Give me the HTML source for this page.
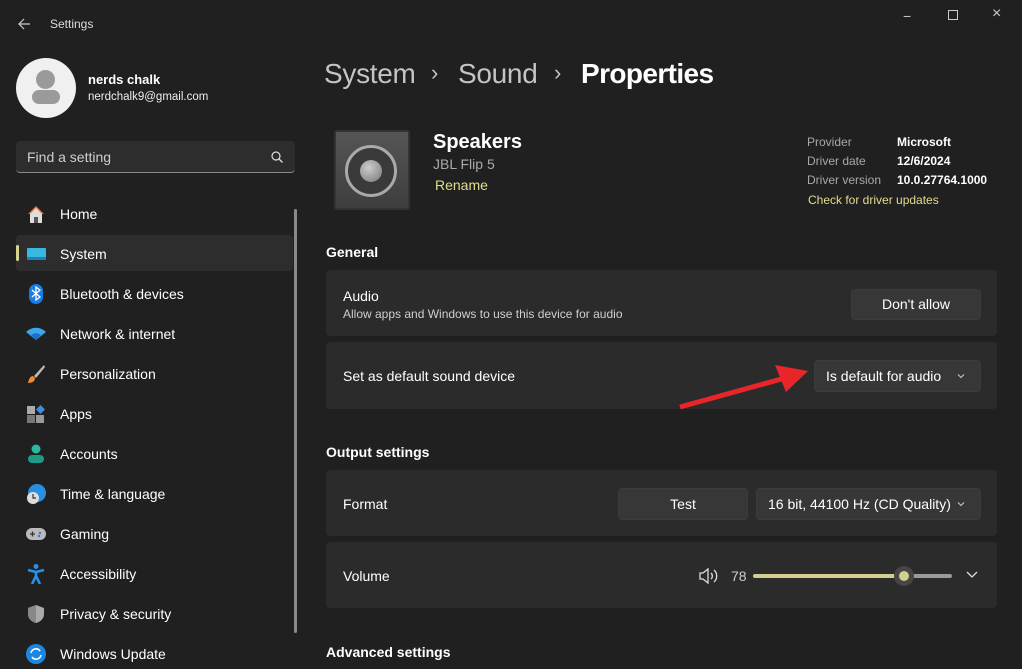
<!DOCTYPE html>
<html><head><meta charset="utf-8"><style>
*{margin:0;padding:0;box-sizing:border-box}
body{width:1022px;height:669px;background:#202020;font-family:"Liberation Sans",sans-serif;color:#fff;position:relative;overflow:hidden;font-size:14px}
.a{position:absolute;white-space:nowrap}
.card{position:absolute;left:326px;width:671px;background:#2b2b2b;border-radius:4px}
.btn{position:absolute;background:#373737;border-radius:4px;border:1px solid #3c3c3c;font-size:14px;color:#fff}
.nav{position:absolute;left:60px;font-size:14px;color:#fff}
.ic{position:absolute;left:26px;width:20px;height:20px}
.g{color:#a8a8a8}
</style></head><body>
<svg class="a" style="left:16px;top:16px" width="16" height="16" viewBox="0 0 16 16"><path d="M14 8H3M8 3L3 8l5 5" stroke="#ccc" stroke-width="1.2" fill="none"/></svg>
<div class="a" style="left:50px;top:17px;font-size:12px;color:#ddd">Settings</div>
<div class="a" style="left:903px;top:8px;font-size:14px;color:#ccc">−</div>
<div class="a" style="left:948px;top:10px;width:10px;height:10px;border:1px solid #ccc"></div>
<div class="a" style="left:992px;top:5px;font-size:16px;color:#ccc">×</div>

<div class="a" style="left:16px;top:58px;width:60px;height:60px;border-radius:50%;background:#f0f0f0"></div>
<div class="a" style="left:36px;top:70px;width:19px;height:19px;border-radius:50%;background:#9a9a9a"></div>
<div class="a" style="left:32px;top:90px;width:28px;height:14px;border-radius:7px;background:#9a9a9a"></div>
<div class="a" style="left:88px;top:72px;font-size:13px;font-weight:bold">nerds chalk</div>
<div class="a" style="left:88px;top:91px;font-size:11.5px;color:#eee">nerdchalk9@gmail.com</div>

<div class="a" style="left:16px;top:141px;width:279px;height:32px;background:#2d2d2d;border-radius:4px;border-bottom:1px solid #8a8a8a"></div>
<div class="a" style="left:27px;top:149px;font-size:14px;color:#cfcfcf">Find a setting</div>
<svg class="a" style="left:270px;top:150px" width="14" height="14" viewBox="0 0 14 14"><circle cx="6" cy="6" r="4" stroke="#ddd" stroke-width="1.2" fill="none"/><path d="M9 9l3.5 3.5" stroke="#ddd" stroke-width="1.3"/></svg>

<div class="a" style="left:16px;top:235px;width:277px;height:36px;background:#2d2d2d;border-radius:4px"></div>
<div class="a" style="left:16px;top:245px;width:3px;height:16px;background:#d6d28f;border-radius:2px"></div>
<div class="a" style="left:294px;top:209px;width:3px;height:424px;background:#8a8a8a;border-radius:2px"></div>

<svg class="ic" style="top:204px" viewBox="0 0 20 20"><path d="M2 10L10 2l8 8" fill="#e8743b"/><path d="M4 10v9h12v-9L10 4z" fill="#ddd"/><rect x="8" y="13" width="4" height="6" fill="#555"/></svg>
<div class="nav" style="top:206px">Home</div>
<svg class="ic" style="top:244px" viewBox="0 0 20 20"><rect x="1" y="4" width="19" height="12" rx="1" fill="#38b8e0"/><rect x="1" y="13" width="19" height="3" fill="#1f7fb8"/></svg>
<div class="nav" style="top:246px">System</div>
<svg class="ic" style="top:284px" viewBox="0 0 20 20"><rect x="3" y="0" width="14" height="20" rx="7" fill="#1a7ce8"/><path d="M6 6l8 7-4 3V3l4 3-8 7" stroke="#fff" stroke-width="1.3" fill="none"/></svg>
<div class="nav" style="top:286px">Bluetooth &amp; devices</div>
<svg class="ic" style="top:324px" viewBox="0 0 20 20"><path d="M0 8a14 14 0 0 1 20 0L10 16z" fill="#3aa6ee"/><path d="M5 11a8 8 0 0 1 10 0L10 16z" fill="#1b6fc8"/></svg>
<div class="nav" style="top:326px">Network &amp; internet</div>
<svg class="ic" style="top:364px" viewBox="0 0 20 20"><path d="M18 1L8 12l2 2L19 3z" fill="#bbb"/><path d="M7 12c-3 0-4 3-5 7 3 0 7-1 7-5z" fill="#f08a30"/></svg>
<div class="nav" style="top:366px">Personalization</div>
<svg class="ic" style="top:404px" viewBox="0 0 20 20"><rect x="1" y="2" width="8" height="8" fill="#aaa"/><rect x="1" y="11" width="8" height="8" fill="#777"/><rect x="10" y="11" width="8" height="8" fill="#999"/><path d="M14.5 1l4.5 4.5-4.5 4.5L10 5.5z" fill="#3a8ee8"/></svg>
<div class="nav" style="top:406px">Apps</div>
<svg class="ic" style="top:444px" viewBox="0 0 20 20"><circle cx="10" cy="5" r="4.5" fill="#2ab8a0"/><rect x="2" y="11" width="16" height="8" rx="4" fill="#1e9a86"/></svg>
<div class="nav" style="top:446px">Accounts</div>
<svg class="ic" style="top:484px" viewBox="0 0 20 20"><circle cx="11" cy="9" r="9" fill="#2b8fe0"/><circle cx="7" cy="14" r="6" fill="#ddd"/><path d="M7 10v4h3" stroke="#333" stroke-width="1.2" fill="none"/></svg>
<div class="nav" style="top:486px">Time &amp; language</div>
<svg class="ic" style="top:524px" viewBox="0 0 20 20"><rect x="0" y="4" width="20" height="12" rx="6" fill="#bbb"/><path d="M4 10h5M6.5 7.5v5" stroke="#333" stroke-width="1.3"/><circle cx="14" cy="9" r="1.2" fill="#2a7fd8"/><circle cx="13" cy="12" r="1.2" fill="#2a7fd8"/></svg>
<div class="nav" style="top:526px">Gaming</div>
<svg class="ic" style="top:564px" viewBox="0 0 20 20"><circle cx="10" cy="2.5" r="2.5" fill="#2a90e8"/><path d="M2 6l8 2 8-2M10 8v4l-4 8M10 12l4 8" stroke="#2a90e8" stroke-width="2.6" fill="none"/></svg>
<div class="nav" style="top:566px">Accessibility</div>
<svg class="ic" style="top:604px" viewBox="0 0 20 20"><path d="M10 1l8 3v6c0 5-4 8-8 9-4-1-8-4-8-9V4z" fill="#aaa"/><path d="M10 1v18c-4-1-8-4-8-9V4z" fill="#888"/></svg>
<div class="nav" style="top:606px">Privacy &amp; security</div>
<svg class="ic" style="top:644px" viewBox="0 0 20 20"><circle cx="10" cy="10" r="10" fill="#1a88e0"/><path d="M5 9a5 5 0 0 1 9-2M15 11a5 5 0 0 1-9 2" stroke="#fff" stroke-width="1.6" fill="none"/></svg>
<div class="nav" style="top:646px">Windows Update</div>

<div class="a" style="left:324px;top:58px;font-size:28px;color:#c4c4c4;letter-spacing:-0.3px">System</div>
<div class="a" style="left:431px;top:60px;font-size:22px;color:#c4c4c4">›</div>
<div class="a" style="left:458px;top:58px;font-size:28px;color:#c4c4c4;letter-spacing:-0.3px">Sound</div>
<div class="a" style="left:554px;top:60px;font-size:22px;color:#c4c4c4">›</div>
<div class="a" style="left:581px;top:58px;font-size:28px;font-weight:bold;color:#fff;letter-spacing:-0.6px">Properties</div>

<div class="a" style="left:334px;top:130px;width:76px;height:80px;background:linear-gradient(#555,#3e3e3e);border:2px solid #333;border-radius:3px"></div>
<div class="a" style="left:345px;top:145px;width:52px;height:52px;border-radius:50%;border:3px solid #aaa;background:#3a3a3a"></div>
<div class="a" style="left:360px;top:160px;width:22px;height:22px;border-radius:50%;background:radial-gradient(circle at 40% 35%,#ccc,#777)"></div>
<div class="a" style="left:433px;top:131px;font-size:20px;font-weight:bold">Speakers</div>
<div class="a" style="left:433px;top:156px;font-size:14px;color:#aaa">JBL Flip 5</div>
<div class="a" style="left:435px;top:177px;font-size:14px;color:#e3dd8f">Rename</div>

<div class="a g" style="left:807px;top:135px;font-size:12px">Provider</div>
<div class="a g" style="left:807px;top:154px;font-size:12px">Driver date</div>
<div class="a g" style="left:807px;top:173px;font-size:12px">Driver version</div>
<div class="a" style="left:897px;top:135px;font-size:12px;font-weight:bold">Microsoft</div>
<div class="a" style="left:897px;top:154px;font-size:12px;font-weight:bold">12/6/2024</div>
<div class="a" style="left:897px;top:173px;font-size:12px;font-weight:bold">10.0.27764.1000</div>
<div class="a" style="left:808px;top:193px;font-size:12px;color:#e3dd8f">Check for driver updates</div>

<div class="a" style="left:326px;top:244px;font-size:14px;font-weight:bold">General</div>
<div class="card" style="top:270px;height:66px"></div>
<div class="a" style="left:343px;top:288px;font-size:14px">Audio</div>
<div class="a" style="left:343px;top:307px;font-size:12px;color:#cfcfcf">Allow apps and Windows to use this device for audio</div>
<div class="btn" style="left:851px;top:289px;width:130px;height:31px;text-align:center;line-height:29px">Don't allow</div>
<div class="card" style="top:342px;height:67px"></div>
<div class="a" style="left:343px;top:368px">Set as default sound device</div>
<div class="btn" style="left:814px;top:360px;width:167px;height:32px;line-height:30px;padding-left:11px">Is default for audio</div>
<svg class="a" style="left:956px;top:373px" width="10" height="6" viewBox="0 0 10 6"><path d="M2 1.5l3 3 3-3" stroke="#ccc" stroke-width="1" fill="none"/></svg>

<div class="a" style="left:326px;top:444px;font-size:14px;font-weight:bold">Output settings</div>
<div class="card" style="top:470px;height:66px"></div>
<div class="a" style="left:343px;top:496px">Format</div>
<div class="btn" style="left:618px;top:488px;width:130px;height:32px;line-height:30px;text-align:center">Test</div>
<div class="btn" style="left:756px;top:488px;width:225px;height:32px;line-height:30px;padding-left:11px">16 bit, 44100 Hz (CD Quality)</div>
<svg class="a" style="left:956px;top:501px" width="10" height="6" viewBox="0 0 10 6"><path d="M2 1.5l3 3 3-3" stroke="#ccc" stroke-width="1" fill="none"/></svg>
<div class="card" style="top:542px;height:66px"></div>
<div class="a" style="left:343px;top:568px">Volume</div>
<svg class="a" style="left:698px;top:567px" width="22" height="18" viewBox="0 0 22 18"><path d="M2 6h3l5-4v14l-5-4H2z" stroke="#ddd" stroke-width="1.3" fill="none"/><path d="M13 6a4 4 0 0 1 0 6M16 3a8 8 0 0 1 0 12" stroke="#ddd" stroke-width="1.3" fill="none"/></svg>
<div class="a" style="left:731px;top:568px;color:#ccc">78</div>
<div class="a" style="left:753px;top:574px;width:151px;height:4px;background:#d2d08e;border-radius:2px"></div>
<div class="a" style="left:904px;top:574px;width:48px;height:4px;background:#9a9a9a;border-radius:2px"></div>
<div class="a" style="left:894px;top:566px;width:20px;height:20px;border-radius:50%;background:#454545"></div>
<div class="a" style="left:899px;top:571px;width:10px;height:10px;border-radius:50%;background:#d2d08e"></div>
<svg class="a" style="left:966px;top:571px" width="12" height="8" viewBox="0 0 12 8"><path d="M1 1l5 5 5-5" stroke="#ddd" stroke-width="1.3" fill="none"/></svg>

<div class="a" style="left:326px;top:644px;font-size:14px;font-weight:bold">Advanced settings</div>

<svg class="a" style="left:0;top:0" width="1022" height="669"><path d="M680 407L785 378" stroke="#e8262a" stroke-width="5"/><path d="M808 371L775 365 786 392z" fill="#e8262a"/></svg>
</body></html>
